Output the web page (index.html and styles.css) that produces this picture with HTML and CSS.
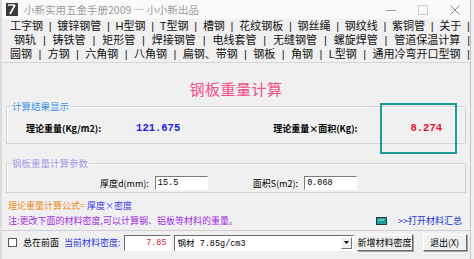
FILE: index.html
```html
<!DOCTYPE html>
<html lang="zh">
<head>
    <meta charset="UTF-8">
    <title>小新实用五金手册2009</title>
    <link rel="stylesheet" href="styles.css">
</head>
<body>

    <div class="window">
        <div class="titlebar">
            <svg class="app-icon" width="12" height="13" viewBox="0 0 12 13">
                <rect x="0" y="0" width="12" height="13" fill="#3c3c3c"/>
                <path d="M2 2 H9" stroke="#fff" stroke-width="1.4"/>
                <path d="M9 2 L4 11" stroke="#fff" stroke-width="1.6"/>
            </svg>
            <span class="title">小新实用五金手册2009 — 小小新出品</span>
            <div class="controls">
                <svg width="10" height="10" viewBox="0 0 10 10"><path d="M0 5.5 H10" stroke="#999" stroke-width="1"/></svg>
                <svg width="10" height="10" viewBox="0 0 10 10"><rect x="0.5" y="0.5" width="9" height="9" fill="none" stroke="#ccc" stroke-width="1"/></svg>
                <svg width="10" height="10" viewBox="0 0 10 10"><path d="M0.5 0.5 L9.5 9.5 M9.5 0.5 L0.5 9.5" stroke="#888" stroke-width="1"/></svg>
            </div>
        </div>

        <div class="menu">
            <div class="menu-row">
                <span>工字钢</span><i>|</i><span>镀锌钢管</span><i>|</i><span>H型钢</span><i>|</i><span>T型钢</span><i>|</i><span>槽钢</span><i>|</i><span>花纹钢板</span><i>|</i><span>钢丝绳</span><i>|</i><span>钢纹线</span><i>|</i><span>紫铜管</span><i>|</i><span>关于</span><i>|</i>
            </div>
            <div class="menu-row row-2">
                <span>钢轨</span><i>|</i><span>铸铁管</span><i>|</i><span>矩形管</span><i>|</i><span>焊接钢管</span><i>|</i><span>电线套管</span><i>|</i><span>无缝钢管</span><i>|</i><span>螺旋焊管</span><i>|</i><span>管道保温计算</span><i>|</i>
            </div>
            <div class="menu-row">
                <span>圆钢</span><i>|</i><span>方钢</span><i>|</i><span>六角钢</span><i>|</i><span>八角钢</span><i>|</i><span>扁钢、带钢</span><i>|</i><span>钢板</span><i>|</i><span>角钢</span><i>|</i><span>L型钢</span><i>|</i><span>通用冷弯开口型钢</span><i>|</i>
            </div>
        </div>

        <div class="content">
            <h1 class="heading">钢板重量计算</h1>

            <fieldset class="group result-group">
                <legend>计算结果显示</legend>
                <div class="result-row">
                    <span class="label bold">理论重量(Kg/m2):</span>
                    <span class="value blue">121.675</span>
                    <span class="label bold total-label">理论重量×面积(Kg):</span>
                    <span class="value red total-value">8.274</span>
                </div>
            </fieldset>
            <div class="highlight"></div>

            <fieldset class="group param-group">
                <legend>钢板重量计算参数</legend>
                <div class="param-row">
                    <label for="thick">厚度d(mm):</label>
                    <input type="text" id="thick" class="field" value="15.5">
                    <label for="area" class="area-label">面积S(m2):</label>
                    <input type="text" id="area" class="field" value="0.068">
                </div>
            </fieldset>

            <p class="formula"><span class="orange">理论重量计算公式=</span> <span class="indigo">厚度×密度</span></p>
            <div class="note-row">
                <p class="note">注:更改下面的材料密度,可以计算钢、铝板等材料的重量。</p>
                <a class="open-link" href="#">
                    <svg width="11" height="8" viewBox="0 0 11 8"><rect x="0.5" y="0.5" width="10" height="7" fill="#1f9e9a" stroke="#1d3b4a"/><path d="M2.5 3 H8" stroke="#b6f0ee"/></svg>
                    <span>&gt;&gt;打开材料汇总</span>
                </a>
            </div>
        </div>

        <div class="bottom-bar">
            <label class="check"><span class="box"></span>总在前面</label>
            <span class="density-label">当前材料密度:</span>
            <input type="text" class="density" value="7.85">
            <div class="select">
                <span>钢材 7.85g/cm3</span>
                <span class="arrow">
                    <svg width="5" height="3" viewBox="0 0 5 3"><path d="M0 0 H5 L2.5 3 Z" fill="#000"/></svg>
                </span>
            </div>
            <button class="btn add-btn">新增材料密度</button>
            <button class="btn exit-btn">退出(X)</button>
        </div>
    </div>

</body>
</html>
```

FILE: styles.css
```css
* {
    box-sizing: border-box;
}

body {
    margin: 0;
    width: 474px;
    height: 259px;
    overflow: hidden;
    background-color: #f0f0f0;
    font-family: "Noto Sans CJK SC", "Noto Sans", sans-serif;
    font-size: 9px;
    color: #000;
    white-space: nowrap;
}

.window {
    height: 259px;
    border-left: 2px solid #dcdcdc;
    border-right: 1px solid #c4c4c4;
    width: 471px;
}

/* title bar */
.titlebar {
    height: 19px;
    background-color: #fafafa;
    display: flex;
    align-items: center;
    padding-left: 4px;
}

.app-icon {
    margin-right: 6px;
}

.title {
    font-size: 10.5px;
    color: #9a9a9a;
}

.controls {
    margin-left: auto;
    display: flex;
    gap: 22px;
    padding-right: 10px;
}

/* menu rows */
.menu {
    border-bottom: 1px solid #d6d6d6;
    padding-bottom: 1px;
}

.menu-row {
    display: flex;
    justify-content: space-between;
    align-items: center;
    height: 14px;
    line-height: 14px;
    font-family: "Liberation Sans", "Noto Sans CJK SC", sans-serif;
    font-size: 11px;
    color: #111;
    padding: 0 0 0 8px;
    overflow: hidden;
}

.row-2 {
    padding-left: 12px;
}

.menu-row i {
    font-style: normal;
    color: #222;
}

/* main content */
.content {
    position: relative;
    padding: 16px 4px 0 4px;
}

.heading {
    margin: 0;
    height: 20px;
    line-height: 20px;
    text-align: center;
    font-size: 15px;
    font-weight: normal;
    color: #f0508a;
    letter-spacing: 0.5px;
}

.group {
    margin: 0;
    border: 1px solid #d2d2d2;
    box-shadow: inset 1px 1px 0 #fff;
    padding: 0;
}

.group legend {
    margin-left: 4px;
    padding: 0 1px;
    line-height: 14px;
    font-size: 9.5px;
}

.result-group {
    height: 45px;
}

.result-group legend {
    color: #3c8fe6;
}

.result-row {
    display: flex;
    align-items: center;
    height: 22px;
    padding-left: 19px;
    margin-top: 4px;
}

.bold {
    font-weight: bold;
}

.value {
    font-family: "Liberation Mono", monospace;
    font-weight: bold;
    font-size: 10.5px;
}

.blue {
    color: #1c24d8;
    margin-left: 35px;
}

.red {
    color: #e0102a;
}

.total-label {
    margin-left: 93px;
}

.total-value {
    margin-left: 53px;
}

.highlight {
    position: absolute;
    left: 378px;
    top: 40px;
    width: 77px;
    height: 51px;
    border: 2px solid #1c9a96;
}

.param-group {
    margin-top: 12px;
    height: 37px;
}

.param-group legend {
    color: #a59ae6;
}

.param-row {
    display: flex;
    align-items: center;
    height: 16px;
    margin-top: 5px;
    padding-left: 93px;
}

.param-row label {
    margin-right: 6px;
}

.field {
    width: 53px;
    height: 14px;
    padding: 0 2px;
    font-family: "Liberation Mono", monospace;
    font-size: 8.5px;
    border: 1px solid #fff;
    border-top-color: #7a7a7a;
    border-left-color: #7a7a7a;
    background-color: #fff;
}

.area-label {
    margin-left: 45px;
}

.formula {
    margin: 5px 0 0 2px;
    line-height: 15px;
}

.orange {
    color: #e98a1e;
}

.indigo {
    color: #3a3ae8;
}

.note-row {
    display: flex;
    align-items: center;
    height: 15px;
}

.note {
    margin: 0 0 0 2px;
    color: #a22be0;
}

.open-link {
    margin-left: auto;
    margin-right: 4px;
    display: flex;
    align-items: center;
    gap: 11px;
    color: #2233d0;
    text-decoration: none;
}

/* bottom toolbar */
.bottom-bar {
    margin-top: 2px;
    border-top: 1px solid #cfcfcf;
    display: flex;
    align-items: center;
    height: 24px;
    padding-left: 6px;
}

.bottom-bar > * {
    flex-shrink: 0;
}

.check {
    display: flex;
    align-items: center;
    gap: 6px;
    font-size: 9px;
}

.box {
    width: 9px;
    height: 9px;
    border: 1px solid #555;
    background-color: #fff;
}

.density-label {
    margin-left: 5px;
    color: #2c3cd8;
    font-size: 9px;
}

.density {
    margin-left: 3px;
    width: 47px;
    height: 16px;
    text-align: right;
    padding: 0 3px;
    color: #e02030;
    font-family: "Liberation Mono", monospace;
    font-size: 8.5px;
    border: 1px solid #fff;
    border-top-color: #6a6a6a;
    border-left-color: #6a6a6a;
    background-color: #fff;
}

.select {
    margin-left: 3px;
    width: 180px;
    height: 16px;
    display: flex;
    align-items: center;
    padding-left: 3px;
    font-family: "Liberation Mono", "Noto Sans CJK SC", monospace;
    font-size: 8.5px;
    border: 1px solid #fff;
    border-top-color: #6a6a6a;
    border-left-color: #6a6a6a;
    background-color: #fff;
}

.arrow {
    margin-left: auto;
    margin-right: 1px;
    width: 11px;
    height: 12px;
    display: flex;
    align-items: center;
    justify-content: center;
    background-color: #f0f0f0;
    border: 1px solid #fff;
    border-right-color: #777;
    border-bottom-color: #777;
}

.btn {
    height: 17px;
    padding: 0;
    font-family: "Noto Sans CJK SC", sans-serif;
    font-size: 9px;
    line-height: 15px;
    white-space: nowrap;
    background-color: #f0f0f0;
    border: 1px solid #fff;
    border-right-color: #6a6a6a;
    border-bottom-color: #6a6a6a;
    box-shadow: 1px 1px 0 #a0a0a0;
}

.add-btn {
    margin-left: 3px;
    width: 56px;
}

.exit-btn {
    margin-left: 10px;
    width: 44px;
}
```
